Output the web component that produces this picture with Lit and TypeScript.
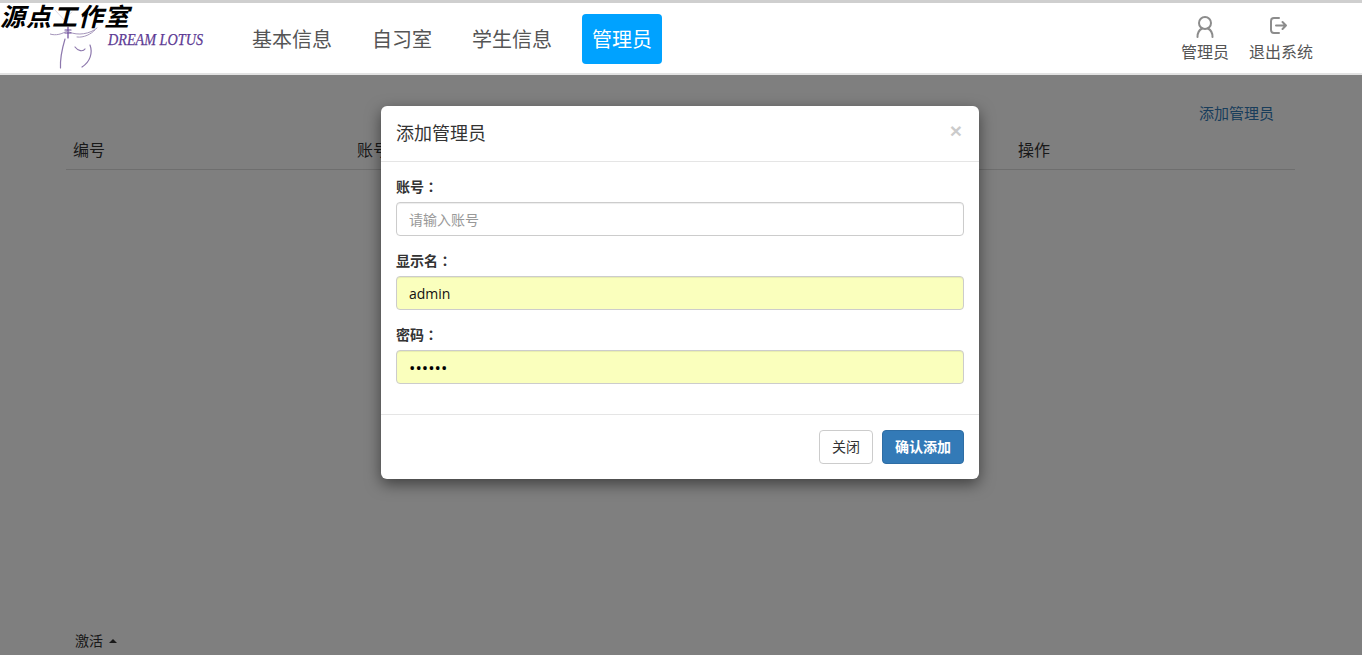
import { LitElement, html, css } from "lit";
import { customElement } from "lit/decorators.js";

@customElement("app-root")
export class AppRoot extends LitElement {
  static styles = css`
    :host { display: flex; flex-direction: column; height: 100vh; overflow: hidden; position: relative;
      font-family: "Open Sans", "Noto Sans CJK SC", sans-serif; font-size: 14px; color: #333; background: #fff; }
    * { box-sizing: border-box; }
    .header { position: relative; z-index: 20; flex: none; height: 75px; background: #fff;
      border-top: 3px solid #cfcfcf; border-bottom: 2px solid #e2e2e2; display: flex; align-items: center; padding-left: 50px; padding-right: 49px; }
    .brand { position: absolute; left: 0; top: -3px; font-size: 25px; line-height: 32px; font-weight: 700; font-style: italic; color: #000; white-space: nowrap; letter-spacing: 1px; }
    .logo { flex: none; width: 192px; height: 70px; display: block; }
    .logo text { font-family: "Liberation Serif", serif; font-style: italic; font-size: 17px; fill: #5d3a94; stroke: #5d3a94; stroke-width: .25; }
    .nav { display: flex; gap: 20px; height: 50px; align-items: center; margin-top: 2px; }
    .nav a { display: block; padding: 0 10px; height: 50px; line-height: 52px; font-size: 20px; color: #555; border-radius: 4px; }
    .nav a.active { background: #00a2ff; color: #fff; }
    .tools { margin-left: auto; display: flex; gap: 20px; }
    .tool { display: flex; flex-direction: column; align-items: center; font-size: 16px; line-height: 22px; color: #555; }
    .tool svg { display: block; width: 24px; height: 24px; margin-bottom: 3px; }
    .main { flex: 1; min-height: 0; display: flex; flex-direction: column; padding: 27px 67px 1px 66px; }
    .actions { display: flex; justify-content: flex-end; padding-right: 21px; line-height: 22px; font-size: 15px; color: #337ab7; }
    .thead { display: grid; grid-template-columns: 284px 661px 1fr; margin-top: 13px; padding: 0 7px; height: 33px; line-height: 26px; font-size: 16px; border-bottom: 1px solid #ddd; }
    .activate { margin-top: auto; margin-left: 9px; height: 26px; line-height: 26px; display: flex; align-items: center; gap: 6px; }
    .caret { width: 0; height: 0; border-left: 4px solid transparent; border-right: 4px solid transparent; border-bottom: 4px solid #333; }
    .backdrop { position: absolute; inset: 0; z-index: 10; background: rgba(0,0,0,.5); display: flex; justify-content: center; align-items: flex-start; padding: 106px 2px 0 0; }
    .modal { width: 598px; height: 373px; background: #fff; border-radius: 6px; box-shadow: 0 5px 15px rgba(0,0,0,.5); display: flex; flex-direction: column; }
    .m-head { height: 56px; flex: none; border-bottom: 1px solid #e5e5e5; display: flex; align-items: center; justify-content: space-between; padding: 0 15px; }
    .m-title { font-size: 18px; line-height: 26px; color: #333; margin-top: -2px; }
    .close { font-size: 21px; font-weight: 700; color: #000; opacity: .2; line-height: 1; margin-top: -6px; margin-right: 2px; font-family: "Liberation Sans", sans-serif; }
    .m-body { flex: 1; padding: 15px 15px 0; display: flex; flex-direction: column; gap: 15px; }
    .field { display: flex; flex-direction: column; gap: 5px; }
    label { font-weight: 700; line-height: 20px; font-size: 14px; height: 20px; }
    .colon { font-family: "Noto Sans CJK TC", sans-serif; line-height: 0; }
    input { width: 100%; height: 34px; padding: 6px 12px; font: inherit; font-size: 14px; border: 1px solid #ccc; border-radius: 4px; color: #111; outline: none; box-shadow: inset 0 1px 1px rgba(0,0,0,.075); }
    input::placeholder { color: #999; }
    input.filled { background: #faffbd; }
    input.secret { font-size: 17px; color: #000; }
    .m-foot { flex: none; height: 65px; border-top: 1px solid #e5e5e5; display: flex; justify-content: flex-end; align-items: flex-start; gap: 9px; padding: 15px 15px 0; }
    .btn { height: 34px; padding: 0 12px; border-radius: 4px; border: 1px solid #ccc; background: #fff; color: #333; font: inherit; font-size: 14px; line-height: 32px; }
    .btn.primary { background: #337ab7; border-color: #2e6da4; color: #fff; font-weight: 700; }
  `;

  render() {
    return html`
      <div class="header">
        <svg class="logo" viewBox="50 3 192 70" aria-hidden="true">
          <g fill="none" stroke-linecap="round">
            <path d="M55 10 L68 24 M72 12 L63 20" stroke="#d5cfdd" stroke-width=".8"/>
            <path d="M50 34 C56 36 62 34 67 31 M69 32 C78 36 90 34 97 28 M77 37 C84 38 91 34 95 30" stroke="#a596bb" stroke-width="1"/>
            <path d="M65 39 C62 49 60 58 60.5 68" stroke="#8d78ad" stroke-width="1.2"/>
            <path d="M75 47 C78 51 83 52 85 49 M90 45 C93 53 90 62 82 67" stroke="#8d78ad" stroke-width="1.2"/>
            <path d="M68 27 L68 38 M65 30 L71 30 M65 33 L71 33" stroke="#6b4a9a" stroke-width="1.2"/>
          </g>
          <text x="108" y="45" textLength="95" lengthAdjust="spacingAndGlyphs">DREAM LOTUS</text>
        </svg>
        <div class="brand">源点工作室</div>
        <nav class="nav">
          <a>基本信息</a><a>自习室</a><a>学生信息</a><a class="active">管理员</a>
        </nav>
        <div class="tools">
          <div class="tool">
            <svg viewBox="0 0 24 24" fill="none" stroke="#8c8c8c" stroke-width="2"><circle cx="12" cy="9" r="6"/><path d="M4.5 23 C4.5 18 7 15.5 9 14.5 M19.5 23 C19.5 18 17 15.5 15 14.5" stroke-linecap="round"/></svg>
            <span>管理员</span>
          </div>
          <div class="tool">
            <svg viewBox="3 1 24 24" fill="none" stroke="#8c8c8c" stroke-width="2" stroke-linecap="round" stroke-linejoin="round"><path d="M13 5 H8 Q5 5 5 8 V17 Q5 20 8 20 H13"/><path d="M10 12.5 H20 M16.5 9 L20 12.5 L16.5 16"/></svg>
            <span>退出系统</span>
          </div>
        </div>
      </div>
      <div class="main">
        <div class="actions"><a>添加管理员</a></div>
        <div class="thead"><span>编号</span><span>账号</span><span>操作</span></div>
        <div class="activate"><span>激活</span><span class="caret"></span></div>
      </div>
      <div class="backdrop">
        <div class="modal">
          <div class="m-head"><span class="m-title">添加管理员</span><span class="close">×</span></div>
          <div class="m-body">
            <div class="field"><label>账号<span class="colon">：</span></label><input placeholder="请输入账号" /></div>
            <div class="field"><label>显示名<span class="colon">：</span></label><input class="filled" value="admin" /></div>
            <div class="field"><label>密码<span class="colon">：</span></label><input class="filled secret" type="password" value="123456" /></div>
          </div>
          <div class="m-foot">
            <button class="btn">关闭</button>
            <button class="btn primary">确认添加</button>
          </div>
        </div>
      </div>
    `;
  }
}
